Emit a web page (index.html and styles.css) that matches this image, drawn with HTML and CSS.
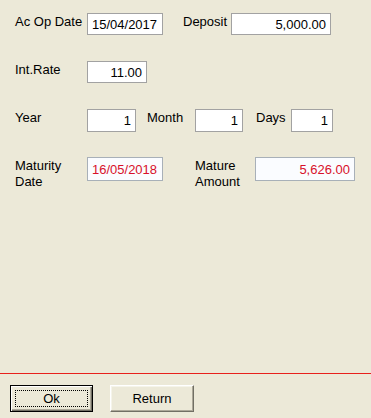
FILE: index.html
```html
<!DOCTYPE html>
<html lang="en">
<head>
    <meta charset="UTF-8">
    <meta name="viewport" content="width=device-width, initial-scale=1.0">
    <title>Fixed Deposit</title>
    <link rel="stylesheet" href="styles.css">
</head>
<body>
    <div class="form">
        <div class="row row-first">
            <span class="label lbl-main">Ac Op Date</span>
            <span class="field f-date">15/04/2017</span>
            <span class="label lbl-deposit">Deposit</span>
            <span class="field f-wide num">5,000.00</span>
        </div>
        <div class="row">
            <span class="label lbl-main">Int.Rate</span>
            <span class="field f-rate num">11.00</span>
        </div>
        <div class="row row-period">
            <span class="label lbl-main">Year</span>
            <span class="field f-year num">1</span>
            <span class="label lbl-month">Month</span>
            <span class="field f-month num">1</span>
            <span class="label lbl-days">Days</span>
            <span class="field f-days num">1</span>
        </div>
        <div class="row row-result">
            <span class="label lbl-main">Maturity<br>Date</span>
            <span class="field f-date result">16/05/2018</span>
            <span class="label lbl-mature">Mature<br>Amount</span>
            <span class="field f-wide num result">5,626.00</span>
        </div>
    </div>
    <div class="footer">
        <button class="btn btn-default"><span class="focus">Ok</span></button>
        <button class="btn btn-return">Return</button>
    </div>
</body>
</html>
```

FILE: styles.css
```css
body {
    margin: 0;
    padding: 0;
    width: 371px;
    height: 418px;
    background-color: #ece9d8;
    font-family: "Liberation Sans", Arial, sans-serif;
    font-size: 13px;
    color: #000;
    display: flex;
    flex-direction: column;
    overflow: hidden;
}
.form {
    flex: 1;
    padding: 13px 0 0 15px;
}
.row {
    display: flex;
    align-items: flex-start;
    height: 22px;
    margin-bottom: 26px;
}
.row-period {
    height: 23px;
    margin-bottom: 25px;
}
.row-result {
    height: 24px;
}
.label {
    padding-top: 1px;
    line-height: 16px;
}
.lbl-main {
    width: 72px;
}
.lbl-deposit {
    margin-left: 20px;
    width: 48px;
}
.lbl-month {
    margin-left: 11px;
    width: 48px;
}
.lbl-days {
    margin-left: 13px;
    width: 35px;
}
.lbl-mature {
    margin-left: 32px;
    width: 60px;
}
.field {
    box-sizing: border-box;
    height: 100%;
    background-color: #fff;
    border: 1px solid #a2a2a2;
    padding: 3px 4px 0 4px;
    line-height: 16px;
    white-space: nowrap;
}
.num {
    text-align: right;
}
.f-date {
    width: 76px;
}
.f-wide {
    width: 100px;
}
.f-rate {
    width: 60px;
}
.f-year {
    width: 49px;
}
.f-month {
    width: 48px;
}
.f-days {
    width: 42px;
}
.field.result {
    background-color: #fafcff;
    border: 1px solid #a8b0b8;
    color: #d8102a;
    padding-top: 4px;
}
.footer {
    box-sizing: border-box;
    height: 45px;
    border-top: 1px solid #e8201c;
    padding: 11px 0 0 10px;
    display: flex;
    align-items: flex-start;
    gap: 17px;
}
.btn {
    box-sizing: border-box;
    width: 84px;
    height: 27px;
    padding: 0;
    background-color: #ece9d8;
    font-family: "Liberation Sans", Arial, sans-serif;
    font-size: 13px;
    color: #000;
    border: 1px solid;
    border-color: #fff #716f64 #716f64 #fff;
    box-shadow: inset -1px -1px #aca899, inset 1px 1px #f5f4ea;
}
.btn-default {
    width: 83px;
    border-color: #000;
    box-shadow: inset 1px 1px #fff, inset -1px -1px #716f64, inset -2px -2px #aca899;
    display: flex;
    padding: 4px;
}
.btn-default .focus {
    flex: 1;
    border: 1px dotted #000;
    display: flex;
    align-items: center;
    justify-content: center;
}
```
